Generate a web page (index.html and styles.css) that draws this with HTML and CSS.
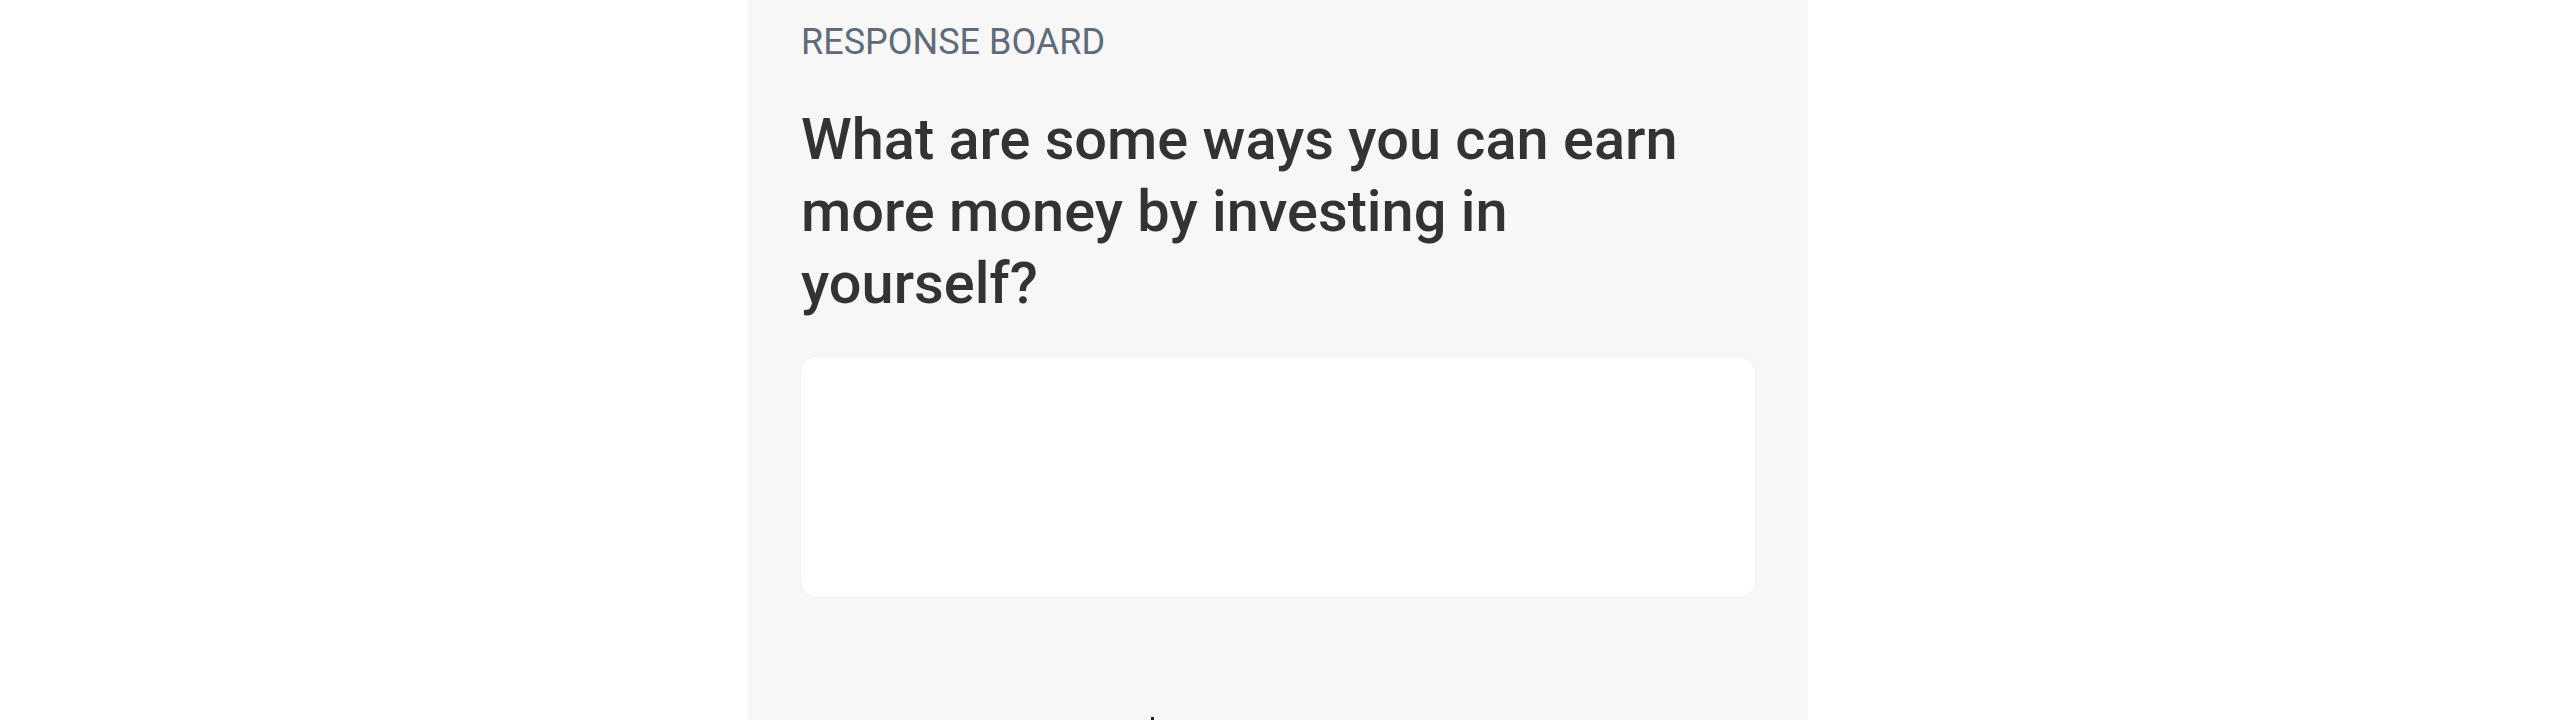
FILE: index.html
```html
<!DOCTYPE html>
<html lang="en">
<head>
<meta charset="utf-8">
<title>Response Board</title>
<link rel="stylesheet" href="styles.css">
</head>
<body>
<main class="panel">
  <div class="label">RESPONSE BOARD</div>
  <h1 class="question">What are some ways you can earn more money by investing in yourself?</h1>
  <div class="answer-box"></div>
  <div class="below"><span class="mark"></span></div>
</main>
</body>
</html>
```

FILE: styles.css
```css
html, body {
  margin: 0;
  padding: 0;
  background: #ffffff;
  height: 100%;
  overflow: hidden;
}

body {
  font-family: Roboto, "Liberation Sans", sans-serif;
}

.panel {
  width: 1060px;
  box-sizing: border-box;
  margin: 0 auto;
  min-height: 720px;
  background: #f7f7f7;
  padding: 21px 53px 0 53px;
}

.label {
  font-size: 36px;
  line-height: 43px;
  font-weight: 400;
  color: #5f6b78;
}

.question {
  margin: 39px 0 0 0;
  font-size: 57.7px;
  line-height: 72px;
  font-weight: 500;
  color: #333333;
}

.answer-box {
  margin-top: 38px;
  height: 240px;
  background: #ffffff;
  border-radius: 16px;
  box-shadow: 0 0 0 1px #f2f2f2;
}

.below {
  padding-top: 120px;
  padding-left: 350px;
}

.mark {
  display: block;
  width: 3px;
  height: 4px;
  background: #222;
}
```
